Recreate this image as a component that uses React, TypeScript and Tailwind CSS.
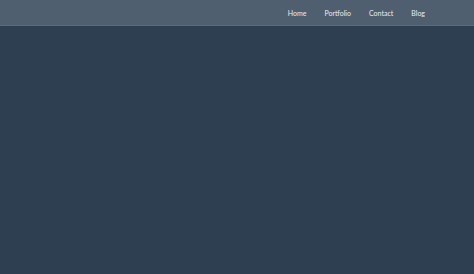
import React from 'react';

const links = ['Home', 'Portfolio', 'Contact', 'Blog'];

export default function App() {
  return (
    <div className="w-full h-screen flex flex-col bg-[#2e3f51]" style={{ fontFamily: 'Lato, sans-serif' }}>
      <header className="h-[26px] shrink-0 bg-[#4f5f70] border-b border-[#5a6a7b] flex items-center justify-end pr-[49px] pt-[1px]">
        <nav className="flex items-center gap-[18px]">
          {links.map((l) => (
            <a key={l} href="#" className="text-[7px] text-[#e8ecf0] leading-none">
              {l}
            </a>
          ))}
        </nav>
      </header>
      <main className="flex-1" />
    </div>
  );
}
